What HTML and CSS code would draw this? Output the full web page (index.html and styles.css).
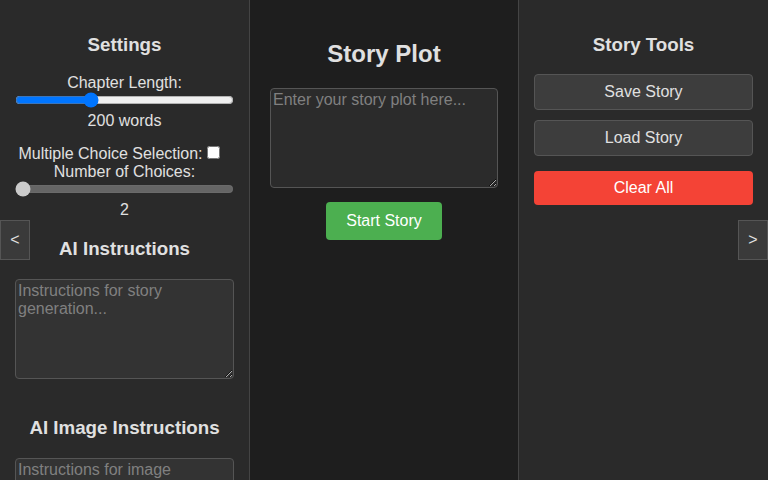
FILE: index.html
```html
<!DOCTYPE html>
<html lang="en">
<head>
<meta charset="utf-8">
<title>Story Generator</title>
<link rel="stylesheet" href="styles.css">
</head>
<body>
<div class="app">
  <aside class="panel panel-left">
    <h3>Settings</h3>
    <div class="setting">
      <label class="field-label" for="chapter-length">Chapter Length:</label>
      <input type="range" id="chapter-length" class="slider" min="50" max="500" step="50" value="200">
      <span class="value">200 words</span>
    </div>
    <div class="setting">
      <label for="multi-choice">Multiple Choice Selection:</label><input type="checkbox" id="multi-choice" class="check"><br>
      <label class="field-label" for="num-choices">Number of Choices:</label>
      <input type="range" id="num-choices" class="slider" min="2" max="10" value="2" disabled>
      <span class="value">2</span>
    </div>
    <h3>AI Instructions</h3>
    <textarea class="box" placeholder="Instructions for story generation..."></textarea>
    <h3>AI Image Instructions</h3>
    <textarea class="box" placeholder="Instructions for image generation..."></textarea>
  </aside>
  <main class="panel panel-main">
    <h2>Story Plot</h2>
    <textarea class="box plot" placeholder="Enter your story plot here..."></textarea>
    <button class="btn btn-start">Start Story</button>
  </main>
  <aside class="panel panel-right">
    <h3>Story Tools</h3>
    <div class="tools">
      <button class="btn btn-tool">Save Story</button>
      <button class="btn btn-tool">Load Story</button>
      <button class="btn btn-clear">Clear All</button>
    </div>
  </aside>
  <button class="toggle toggle-left">&lt;</button>
  <button class="toggle toggle-right">&gt;</button>
</div>
</body>
</html>
```

FILE: styles.css
```css
* {
  box-sizing: border-box;
}

html, body {
  margin: 0;
  height: 100%;
}

body {
  font-family: "Liberation Sans", Arial, sans-serif;
  font-size: 16px;
  color: #e0e0e0;
  background: #1e1e1e;
  overflow: hidden;
}

.app {
  display: flex;
  height: 100vh;
  position: relative;
}

.panel {
  height: 100%;
  overflow: hidden;
  text-align: center;
}

.panel-left {
  width: 250px;
  flex: none;
  padding: 15px;
  background: #2a2a2a;
  border-right: 1px solid #444;
}

.panel-right {
  width: 250px;
  flex: none;
  padding: 15px;
  background: #2a2a2a;
  border-left: 1px solid #444;
}

.panel-main {
  flex: 1;
  padding: 20px;
  background: #1e1e1e;
}

h2 {
  font-size: 24px;
  margin: 19.92px 0;
}

h3 {
  font-size: 18.72px;
  margin: 18.72px 0;
}

.setting {
  margin-bottom: 13px;
}

.field-label {
  display: block;
}

.slider {
  display: block;
  width: 100%;
  margin: 0 0 4px;
}

.value {
  display: block;
}

.check {
  margin: 3px 11px 3px 4px;
}

.box {
  display: block;
  width: 100%;
  height: 100px;
  margin: 0;
  padding: 2px;
  background: #333;
  color: #e0e0e0;
  border: 1px solid #555;
  border-radius: 4px;
  font-family: "Liberation Sans", Arial, sans-serif;
  font-size: 16px;
  resize: vertical;
}

.box::placeholder {
  color: #808080;
}

.box.plot {
  background: #2b2b2b;
}

.panel-left .box {
  margin-bottom: 38px;
}

.btn {
  font-family: "Liberation Sans", Arial, sans-serif;
  font-size: 16px;
  border-radius: 4px;
  cursor: pointer;
}

.btn-start {
  margin-top: 14px;
  padding: 10px 20px;
  background: #4caf50;
  color: #fff;
  border: none;
}

.tools {
  display: flex;
  flex-direction: column;
  gap: 10px;
}

.btn-tool {
  width: 100%;
  padding: 8px;
  background: #3d3d3d;
  color: #e0e0e0;
  border: 1px solid #555;
}

.btn-clear {
  width: 100%;
  margin-top: 5px;
  padding: 8px;
  background: #f44336;
  color: #fff;
  border: none;
}

.toggle {
  position: absolute;
  top: 220px;
  width: 30px;
  height: 40px;
  padding: 0;
  background: #3a3a3a;
  color: #e0e0e0;
  border: 1px solid #555;
  font-family: "Liberation Sans", Arial, sans-serif;
  font-size: 16px;
}

.toggle-left {
  left: 0;
}

.toggle-right {
  right: 0;
}
```
